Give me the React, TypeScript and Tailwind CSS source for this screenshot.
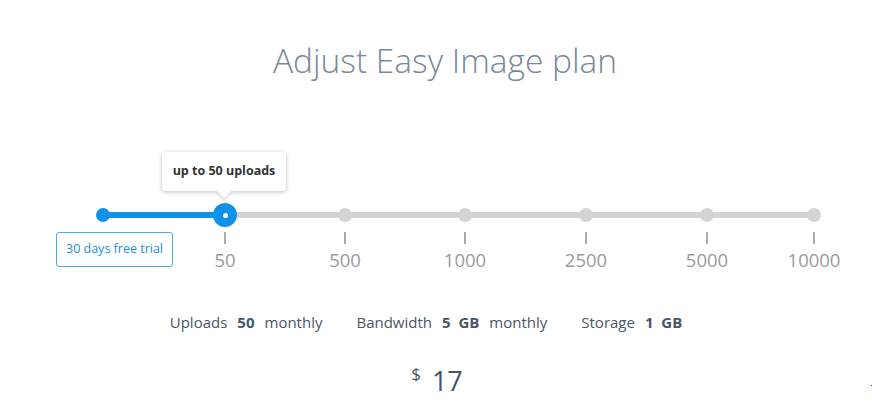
import React from 'react';

interface Step {
    label: string;
    left: number;
}

const steps: Step[] = [
    { label: '50', left: 122 },
    { label: '500', left: 242 },
    { label: '1000', left: 362 },
    { label: '2500', left: 483 },
    { label: '5000', left: 604 },
    { label: '10000', left: 711 },
];

const active = 0;

const App: React.FC = () => {
    const handleLeft = steps[active].left;

    return (
        <div className="w-[872px] h-[420px] bg-white relative overflow-hidden" style={{ fontFamily: '"Open Sans", Lato, sans-serif' }}>
            {/* Title */}
            <h1 className="pt-[40px] pl-[18px] text-center text-[33.5px] leading-[40px] font-light text-[#7a8899]">
                Adjust Easy Image plan
            </h1>

            {/* Slider */}
            <div className="relative ml-[103px] mt-[72px] w-[711px] h-[130px]">
                {/* Tooltip */}
                <div
                    className="absolute top-0 -translate-x-1/2 w-[124px] h-[39px] bg-white rounded-[3px] shadow-[0_1px_4px_rgba(0,0,0,0.25)] flex items-center justify-center"
                    style={{ left: handleLeft - 1 }}
                >
                    <span className="text-[12.5px] font-bold text-[#333]">up to 50 uploads</span>
                    <div className="absolute left-1/2 -bottom-[5px] -translate-x-1/2 w-[10px] h-[10px] rotate-45 bg-white shadow-[2px_2px_3px_rgba(0,0,0,0.12)]"></div>
                </div>

                {/* Track */}
                <div className="absolute left-0 right-0 top-[60px] h-[6px] rounded-full bg-[#d4d4d4]"></div>
                <div
                    className="absolute left-0 top-[60px] h-[6px] rounded-full bg-[#1192e8]"
                    style={{ width: handleLeft }}
                ></div>

                {/* Start dot */}
                <div className="absolute left-0 top-[63px] w-[14px] h-[14px] -translate-x-1/2 -translate-y-1/2 rounded-full bg-[#1192e8]"></div>

                {/* Step dots, ticks and labels */}
                {steps.map((step, index) => (
                    <div key={step.label} className="absolute top-0" style={{ left: step.left }}>
                        {index === active ? (
                            <div className="absolute top-[63px] w-[24px] h-[24px] -translate-x-1/2 -translate-y-1/2 rounded-full bg-[#1192e8] flex items-center justify-center">
                                <div className="w-[5px] h-[5px] rounded-full bg-white"></div>
                            </div>
                        ) : (
                            <div className="absolute top-[63px] w-[14px] h-[14px] -translate-x-1/2 -translate-y-1/2 rounded-full bg-[#d4d4d4]"></div>
                        )}
                        <div className="absolute top-[80px] w-[2px] h-[12px] -translate-x-1/2 bg-[#aaa]"></div>
                        <div className="absolute top-[96px] -translate-x-1/2 text-[18.5px] leading-[24px] text-[#9a9a9a] whitespace-nowrap">
                            {step.label}
                        </div>
                    </div>
                ))}

                {/* Trial badge */}
                <div className="absolute left-[-47px] top-[80px] w-[117px] h-[35px] rounded-[3px] border border-[#4aa8ec] flex items-center justify-center">
                    <span className="text-[12.5px] text-[#1a8fe3]">30 days free trial</span>
                </div>
            </div>

            {/* Plan details */}
            <div className="mt-[29px] pr-[20px] flex justify-center gap-[34px] text-[15px] leading-[22px] text-[#4a5568]">
                <div className="flex gap-[10px]">
                    <span>Uploads</span>
                    <span className="font-bold">50</span>
                    <span>monthly</span>
                </div>
                <div className="flex gap-[10px]">
                    <span>Bandwidth</span>
                    <span className="font-bold">5&nbsp;&nbsp;GB</span>
                    <span>monthly</span>
                </div>
                <div className="flex gap-[10px]">
                    <span>Storage</span>
                    <span className="font-bold">1&nbsp;&nbsp;GB</span>
                </div>
            </div>

            {/* Price */}
            <div className="mt-[30px] flex justify-center items-start gap-[11px] text-[#44546a] pl-[2px]">
                <span className="text-[17px] leading-[20px] mt-[1px]">$</span>
                <span className="text-[27px] leading-[30px] mt-[3px]">17</span>
            </div>

            <div className="absolute left-[871px] top-[385px] w-[1px] h-[1px] bg-[#3030d0]"></div>
        </div>
    );
};

export default App;
